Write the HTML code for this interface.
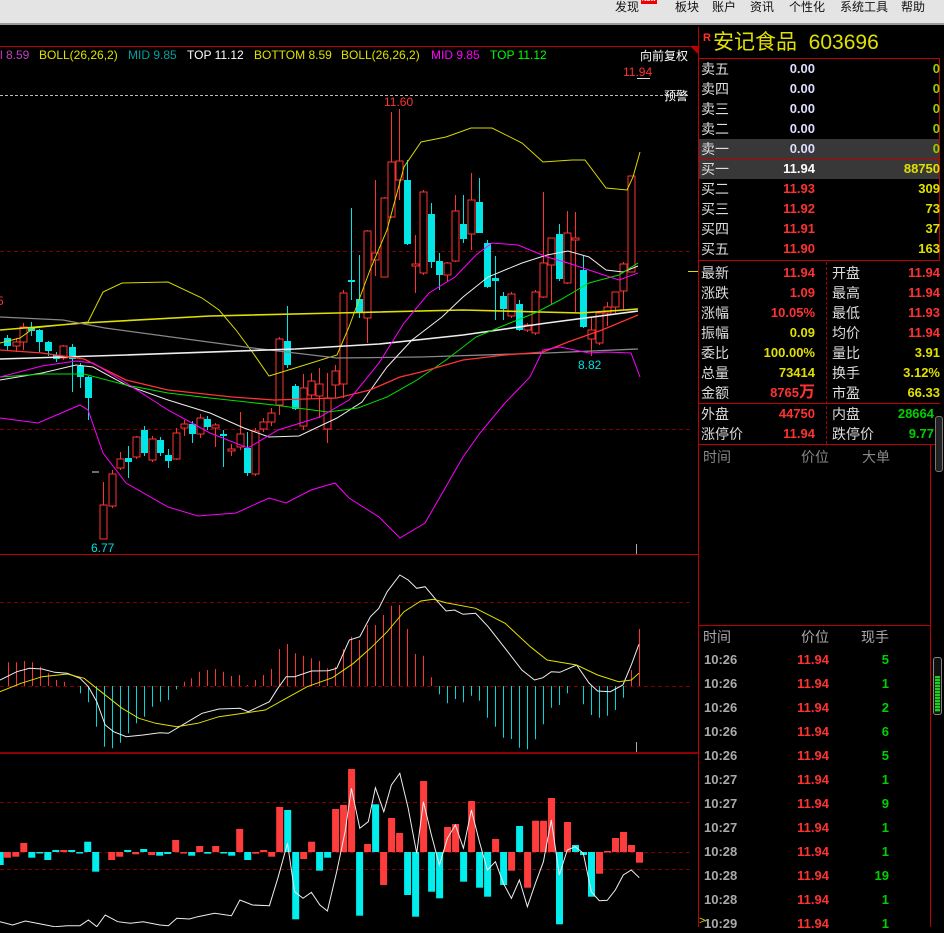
<!DOCTYPE html>
<html><head><meta charset="utf-8"><style>
*{margin:0;padding:0;box-sizing:border-box}
body{width:944px;height:927px;background:#000;overflow:hidden;position:relative;font-family:"Liberation Sans","Noto Sans CJK SC",sans-serif}
#top{position:absolute;left:0;top:0;width:944px;height:25px;background:#e4e4e4;border-bottom:2px solid #9a9a9a}
#top span{position:absolute;top:0;font-size:12px;color:#111;line-height:14px}
#top .new{position:absolute;left:641px;top:-3px;background:#e00;color:#fff;font-size:6px;line-height:7px;padding:0 1px;font-weight:bold}
.r{position:absolute;font-size:13px;white-space:nowrap;line-height:18px}
.n{font-weight:bold;text-align:right}
</style></head><body>
<div id="top">
<span style="left:615px">发现</span><span class="new">NEW</span>
<span style="left:675px">板块</span><span style="left:712px">账户</span><span style="left:750px">资讯</span><span style="left:789px">个性化</span><span style="left:840px">系统工具</span><span style="left:901px">帮助</span>
</div>
<svg id="ch" width="944" height="927" style="position:absolute;left:0;top:0" xmlns="http://www.w3.org/2000/svg">
<line x1="0" y1="46.5" x2="690" y2="46.5" stroke="#c00000"/>
<polygon points="690,46 698,46 698,54" fill="#c00000"/>
<line x1="0" y1="95.5" x2="690" y2="95.5" stroke="#bbb" stroke-dasharray="3,2"/>
<line x1="0" y1="251.5" x2="690" y2="251.5" stroke="#800000" stroke-dasharray="4,3"/>
<line x1="0" y1="429.5" x2="690" y2="429.5" stroke="#800000" stroke-dasharray="4,3"/>
<line x1="0" y1="554.5" x2="698" y2="554.5" stroke="#c00000"/>
<line x1="0" y1="602.5" x2="690" y2="602.5" stroke="#800000" stroke-dasharray="4,3"/>
<line x1="0" y1="686.5" x2="690" y2="686.5" stroke="#800000" stroke-dasharray="4,3"/>
<line x1="0" y1="753" x2="698" y2="753" stroke="#c00000" stroke-width="1.5"/>
<line x1="0" y1="802.5" x2="690" y2="802.5" stroke="#800000" stroke-dasharray="4,3"/>
<line x1="0" y1="852.5" x2="690" y2="852.5" stroke="#800000" stroke-dasharray="4,3"/>
<line x1="0" y1="869.5" x2="690" y2="869.5" stroke="#800000" stroke-dasharray="4,3"/>
<line x1="698.5" y1="27" x2="698.5" y2="927" stroke="#c00000"/>
<line x1="637" y1="78.5" x2="650" y2="78.5" stroke="#ddd"/>
<line x1="688" y1="271.5" x2="698" y2="271.5" stroke="#dd0"/>
<line x1="636.5" y1="544" x2="636.5" y2="554" stroke="#aaa"/>
<line x1="636.5" y1="742" x2="636.5" y2="752" stroke="#aaa"/>
<g id="g"></g>
<g font-size="12" font-family="Liberation Sans,Noto Sans CJK SC,sans-serif">
<text x="0" y="59" fill="#c040c0">l 8.59</text>
<text x="39" y="59" fill="#e0e000">BOLL(26,26,2)</text>
<text x="128" y="59" fill="#00a0a0">MID 9.85</text>
<text x="187" y="59" fill="#fff">TOP 11.12</text>
<text x="254" y="59" fill="#e0e000">BOTTOM 8.59</text>
<text x="341" y="59" fill="#e0e000">BOLL(26,26,2)</text>
<text x="431" y="59" fill="#ff00ff">MID 9.85</text>
<text x="490" y="59" fill="#00ff00">TOP 11.12</text>
<text x="640" y="60" fill="#fff">向前复权</text>
<text x="623" y="76" fill="#ff3232">11.94</text>
<text x="664" y="100" fill="#fff">预警</text>
<text x="384" y="106" fill="#ff3232">11.60</text>
<text x="-3" y="305" fill="#ff3232">5</text>
<text x="578" y="369" fill="#00e0e0">8.82</text>
<text x="91" y="552" fill="#00e0e0">6.77</text>
</g>
</svg>

<div class="r" style="left:703px;top:29px;color:#ff3232;font-size:11px;font-weight:bold">R</div>
<div class="r" style="left:713px;top:30px;color:#e0e000;font-size:21px;line-height:26px">安记食品&nbsp; 603696</div>
<div style="position:absolute;left:698px;top:58px;width:242px;height:203px;border:1px solid #c00000"></div>
<div style="position:absolute;left:699px;top:139px;width:240px;height:40px;background:#383838"></div>
<div style="position:absolute;left:698px;top:159px;width:242px;height:1px;background:#c00000"></div>
<div style="position:absolute;left:698px;top:403px;width:242px;height:1px;background:#c00000"></div>
<div style="position:absolute;left:698px;top:444px;width:242px;height:1px;background:#c00000"></div>
<div style="position:absolute;left:826px;top:262px;width:1px;height:182px;border-left:1px dashed #a00000"></div>
<div style="position:absolute;left:698px;top:625px;width:232px;height:1px;background:#c00000"></div>
<div style="position:absolute;left:930px;top:445px;width:1px;height:482px;background:#c00000"></div>
<div style="position:absolute;left:935px;top:416px;width:8px;height:56px;border:1px solid #777;border-radius:3px;background:#222"></div>
<div style="position:absolute;left:933px;top:657px;width:9px;height:58px;border:1px solid #888;border-radius:3px;background:#111"><div style="margin:18px 1px 0;height:36px;background:repeating-linear-gradient(#2c2 0 2px,#060 2px 3px)"></div></div>
<div id="rp"></div>
<script>
(function(){
var rp=document.getElementById('rp'),h='';
function t(x,y,s,c,extra){h+='<div class="r" style="left:'+x+'px;top:'+(y-9)+'px;color:'+c+';'+(extra||'')+'">'+s+'</div>';}
function tr(x,y,s,c,extra){h+='<div class="r n" style="right:'+(944-x)+'px;top:'+(y-9)+'px;color:'+c+';'+(extra||'')+'">'+s+'</div>';}
var q=[['卖五','0.00','0','#ddf'],['卖四','0.00','0','#ddf'],['卖三','0.00','0','#ddf'],['卖二','0.00','0','#ddf'],['卖一','0.00','0','#ddf'],['买一','11.94','88750','#fff'],['买二','11.93','309','#ff3232'],['买三','11.92','73','#ff3232'],['买四','11.91','37','#ff3232'],['买五','11.90','163','#ff3232']];
q.forEach(function(r,i){var y=69+i*20;t(701,y,r[0],'#ddd','font-size:14px');tr(815,y,r[1],r[3]);tr(940,y,r[2],i<5?'#9c0':'#e0e000');});
var s=[['最新','11.94','#ff3232','开盘','11.94','#ff3232'],['涨跌','1.09','#ff3232','最高','11.94','#ff3232'],['涨幅','10.05%','#ff3232','最低','11.93','#ff3232'],['振幅','0.09','#e0e000','均价','11.94','#ff3232'],['委比','100.00%','#e0e000','量比','3.91','#e0e000'],['总量','73414','#e0e000','换手','3.12%','#e0e000'],['金额','8765<span style="font-size:16px;line-height:1">万</span>','#ff3232','市盈','66.33','#e0e000']];
s.forEach(function(r,i){var y=273+i*20;t(701,y,r[0],'#ddd','font-size:14px');tr(815,y,r[1],r[2]);t(832,y,r[3],'#ddd','font-size:14px');tr(940,y,r[4],r[5]);});
t(701,414,'外盘','#ddd','font-size:14px');tr(815,414,'44750','#ff3232');t(832,414,'内盘','#ddd','font-size:14px');tr(934,414,'28664','#00d000');
t(701,434,'涨停价','#ddd','font-size:14px');tr(815,434,'11.94','#ff3232');t(832,434,'跌停价','#ddd','font-size:14px');tr(934,434,'9.77','#00d000');
t(703,457,'时间','#888','font-size:14px');t(801,457,'价位','#888','font-size:14px');t(862,457,'大单','#888','font-size:14px');
t(703,637,'时间','#aaa','font-size:14px');t(801,637,'价位','#aaa','font-size:14px');t(861,637,'现手','#aaa','font-size:14px');
var tm=['10:26','10:26','10:26','10:26','10:26','10:27','10:27','10:27','10:28','10:28','10:28','10:29'],v=['5','1','2','6','5','1','9','1','1','19','1','1'];
tm.forEach(function(a,i){var y=660+i*24;t(704,y,a,'#aaa','font-weight:bold');tr(829,y,'11.94','#ff3232');tr(889,y,v[i],'#00d000');});
h+='<div class="r" style="left:699px;top:912px;color:#dd0;font-size:11px">&gt;</div>';
rp.innerHTML=h;

var g='',X=function(z){return z/2.376};
function pl(pts,c,w){g+='<polyline fill="none" stroke="'+c+'" stroke-width="'+(w||1)+'" points="'+pts.map(function(p){return p.join(',')}).join(' ')+'"/>';}
var C=[[7,338,346,335,350,'c'],[16,342,346,338,352,'r'],[23,327,342,323,350,'r'],[31,327,331,322,336,'c'],[39,330,342,329,352,'c'],[48,342,351,341,356,'c'],[56,355,359,352,362,'c'],[63,346,358,345,360,'r'],[72,347,359,344,392,'c'],[80,366,377,363,388,'c'],[88,377,398,376,420,'c'],[103,505,539,482,539,'r'],[112,474,506,470,508,'r'],[120,459,468,452,470,'r'],[128,458,462,446,478,'c'],[136,437,457,436,459,'r'],[144,430,453,426,456,'c'],[152,439,460,436,462,'r'],[160,440,453,437,456,'c'],[168,455,461,449,468,'c'],[176,433,459,428,460,'r'],[184,424,428,420,436,'r'],[192,424,434,421,443,'c'],[200,418,434,414,438,'r'],[207,419,427,416,430,'c'],[215,425,428,423,447,'r'],[223,434,436,430,467,'c'],[231,449,451,444,456,'r'],[240,434,447,412,450,'r'],[247,448,473,432,476,'c'],[255,431,474,428,476,'r'],[263,422,429,418,432,'r'],[271,413,422,408,426,'r'],[279,339,405,337,415,'r'],[287,341,365,306,368,'c'],[295,386,409,384,410,'c'],[303,388,426,374,430,'r'],[311,381,395,373,398,'r'],[319,384,396,368,418,'r'],[327,398,429,373,443,'r'],[335,371,385,365,398,'r'],[343,293,384,290,398,'r'],[351,280,282,208,300,'c'],[359,299,313,255,318,'c'],[367,231,318,230,343,'r'],[375,253,260,180,276,'r'],[384,198,277,197,277,'r'],[391,162,217,112,218,'r'],[399,161,180,109,200,'r'],[407,180,244,160,245,'c'],[415,264,266,235,293,'r'],[423,192,273,190,275,'r'],[431,214,262,203,268,'c'],[439,261,275,253,290,'c'],[447,263,275,262,282,'r'],[455,211,261,195,262,'r'],[463,224,239,195,243,'c'],[471,200,234,173,250,'r'],[479,202,233,178,233,'c'],[487,243,287,240,288,'c'],[495,278,281,256,320,'c'],[503,296,309,292,320,'c'],[511,294,316,292,318,'r'],[519,304,330,300,331,'c'],[527,325,330,323,332,'r'],[535,292,333,290,335,'r'],[543,263,297,192,298,'r'],[551,238,265,238,305,'r'],[559,234,279,224,281,'c'],[567,233,283,211,284,'r'],[575,238,240,212,312,'r'],[583,270,327,256,328,'c'],[591,330,339,318,356,'r'],[599,313,343,313,345,'r'],[607,307,313,302,326,'r'],[615,292,307,292,313,'r'],[623,264,291,262,310,'r'],[631,176,272,176,272,'r']];
C.forEach(function(c){var col=c[5]=='r'?'#ff3232':'#00e5e5';
g+='<line x1="'+(c[0]+.5)+'" y1="'+c[3]+'" x2="'+(c[0]+.5)+'" y2="'+c[4]+'" stroke="'+col+'"/>';
if(c[5]=='r')g+='<rect x="'+(c[0]-3)+'" y="'+c[1]+'" width="7" height="'+Math.max(1,c[2]-c[1])+'" fill="#000" stroke="'+col+'"/>';
else g+='<rect x="'+(c[0]-3)+'" y="'+c[1]+'" width="7" height="'+Math.max(2,c[2]-c[1])+'" fill="'+col+'"/>';});
g+='<line x1="92" y1="472" x2="99" y2="472" stroke="#ddd"/>';
pl([[0,343],[20,338],[34,328],[88,322],[103,292],[122,283],[168,282],[202,298],[219,310],[236,330],[253,353],[269,376],[295,368],[337,355],[349,327],[370,270],[387,230],[404,167],[421,142],[446,137],[471,128],[492,128],[522,143],[543,162],[572,160],[585,160],[606,188],[627,190],[633,177],[640,152]],'#d8d800');
pl([[0,330],[84,323],[210,316],[337,313],[463,310],[581,313],[638,309]],'#e0e000',1.6);
pl([[0,317],[63,320],[105,328],[253,348],[337,358],[421,357],[547,353],[638,349]],'#888',1.3);
pl([[0,359],[126,355],[295,349],[379,344],[463,335],[547,323],[638,311]],'#eee',1.6);
pl([[0,380],[42,373],[76,365],[93,367],[126,385],[168,400],[210,413],[244,428],[269,437],[299,436],[337,418],[362,402],[387,367],[412,340],[442,317],[463,297],[488,277],[522,263],[547,255],[568,251],[589,257],[606,270],[623,272],[638,266]],'#eee');
pl([[0,377],[42,374],[84,374],[126,385],[168,393],[210,398],[274,405],[328,412],[358,408],[387,397],[417,380],[446,360],[476,337],[505,325],[535,313],[560,300],[589,283],[619,275],[638,263]],'#00e000');
pl([[0,350],[42,353],[84,359],[126,380],[168,390],[232,397],[274,400],[337,398],[370,390],[400,377],[421,372],[463,360],[505,355],[543,352],[568,342],[602,330],[638,315]],'#ff3232',1.3);
pl([[0,377],[42,366],[76,361],[93,363],[126,383],[168,410],[210,433],[248,448],[278,430],[320,417],[349,400],[379,363],[404,323],[429,293],[455,277],[476,255],[492,243],[518,245],[547,257],[568,263],[598,273],[619,280],[638,273]],'#ff00ff');
pl([[0,418],[38,423],[80,405],[88,410],[103,453],[126,483],[168,507],[198,516],[236,513],[269,498],[286,503],[311,490],[335,483],[349,498],[379,517],[400,538],[425,523],[463,457],[480,433],[505,403],[530,377],[543,350],[560,347],[589,353],[606,352],[631,353],[640,377]],'#ff00ff');
var M=[[18,322],[37,322],[56,318],[75,322],[94,335],[113,355],[132,375],[151,380],[189,415],[208,442],[227,515],[246,575],[265,580],[284,563],[303,535],[322,505],[341,485],[360,455],[379,440],[398,435],[417,403],[436,380],[455,370],[474,350],[493,345],[512,342],[531,350],[550,363],[569,360],[588,390],[607,375],[626,360],[645,342],[664,282],[683,267],[702,295],[721,302],[740,310],[759,318],[778,340],[797,335],[816,283],[835,245],[854,255],[873,210],[892,210],[911,180],[930,152],[949,150],[968,222],[987,297],[1006,302],[1025,367],[1044,418],[1063,445],[1082,432],[1101,442],[1120,422],[1139,437],[1158,488],[1177,515],[1196,548],[1215,552],[1234,578],[1253,583],[1272,553],[1291,508],[1310,458],[1329,450],[1348,415],[1386,448],[1405,480],[1424,488],[1443,482],[1462,465],[1481,428],[1500,345],[1519,222]];
M.forEach(function(m){var x=(Math.round(X(m[0]))+.5),y=555+m[1]/3;g+='<line x1="'+x+'" y1="686" x2="'+x+'" y2="'+y.toFixed(1)+'" stroke="'+(y<686?'#ff3232':'#00d8d8')+'"/>';});
var cv=function(a){return a.map(function(p){return [X(p[0]).toFixed(1),(555+p[1]/3).toFixed(1)]})};
pl(cv([[0,375],[40,350],[70,340],[100,342],[130,352],[160,355],[190,370],[210,395],[230,440],[250,510],[270,530],[300,545],[340,540],[380,533],[400,535],[440,505],[480,475],[520,462],[570,460],[590,470],[640,440],[660,400],[680,365],[700,365],[740,348],[780,347],[800,340],[830,255],[855,245],[880,185],[900,160],[920,110],[950,60],[970,75],[990,100],[1010,95],[1040,140],[1060,168],[1080,165],[1100,178],[1130,175],[1160,215],[1200,280],[1240,345],[1270,375],[1290,368],[1310,350],[1330,352],[1370,330],[1400,385],[1420,408],[1450,410],[1480,390],[1500,330],[1518,268]]),'#eee');
pl(cv([[0,410],[50,385],[100,365],[160,357],[200,370],[240,410],[290,460],[330,490],[370,505],[420,515],[470,505],[520,485],[570,476],[630,465],[680,430],[730,395],[790,368],[840,325],[880,280],[920,230],[960,170],[1000,138],[1030,133],[1060,143],[1130,160],[1200,205],[1260,275],[1300,315],[1370,330],[1420,360],[1470,380],[1500,375],[1518,355]]),'#e0e000');
var V=[[0,930,'c'],[17,908,'r'],[37,905,'r'],[56,864,'r'],[75,908,'c'],[94,893,'c'],[113,915,'c'],[132,885,'c'],[151,885,'r'],[170,885,'c'],[189,893,'c'],[208,860,'c'],[227,950,'c'],[265,915,'r'],[284,905,'r'],[303,885,'c'],[322,898,'r'],[341,882,'c'],[360,900,'r'],[379,902,'c'],[398,897,'c'],[417,855,'r'],[436,893,'r'],[455,902,'c'],[474,873,'r'],[493,896,'c'],[512,873,'r'],[531,893,'c'],[550,902,'c'],[569,822,'r'],[588,915,'c'],[607,896,'r'],[626,885,'r'],[645,905,'r'],[664,756,'r'],[683,765,'c'],[702,1093,'c'],[721,912,'r'],[740,860,'r'],[759,947,'c'],[778,908,'c'],[797,762,'r'],[816,750,'r'],[835,642,'r'],[854,1082,'c'],[873,867,'r'],[892,748,'c'],[911,990,'r'],[930,789,'r'],[949,834,'r'],[968,1020,'c'],[987,1085,'c'],[1006,678,'r'],[1025,1010,'c'],[1044,1030,'c'],[1063,816,'r'],[1082,807,'r'],[1101,980,'c'],[1120,738,'r'],[1139,998,'c'],[1158,1025,'c'],[1177,852,'r'],[1196,990,'c'],[1215,947,'r'],[1234,813,'c'],[1253,998,'r'],[1272,797,'r'],[1291,797,'r'],[1310,729,'r'],[1329,1108,'c'],[1348,801,'r'],[1367,870,'c'],[1386,900,'c'],[1405,1025,'c'],[1424,956,'r'],[1443,888,'r'],[1462,849,'r'],[1481,831,'r'],[1500,870,'r'],[1519,923,'r']];
V.forEach(function(v){var x=X(v[0])-3.3,y=555+v[1]/3,b=852;var t=Math.min(y,b),hh=Math.max(1.5,Math.abs(y-b));g+='<rect x="'+x.toFixed(1)+'" y="'+t.toFixed(1)+'" width="7" height="'+hh.toFixed(1)+'" fill="'+(v[2]=='r'?'#ff3c3c':'#00eeee')+'"/>';});
pl(cv([[0,1100],[30,1110],[60,1098],[100,1108],[130,1115],[160,1112],[190,1112],[210,1095],[230,1115],[250,1080],[280,1100],[310,1105],[340,1100],[380,1110],[400,1112],[420,1090],[450,1092],[470,1085],[510,1075],[550,1082],[570,1035],[600,1050],[640,1052],[660,970],[683,865],[700,1010],[720,1030],[740,1012],[760,1050],[778,1068],[800,950],[820,830],[835,700],[855,820],[875,800],[892,698],[912,770],[930,690],[950,655],[970,760],[990,895],[1006,740],[1025,840],[1044,930],[1063,850],[1082,810],[1101,880],[1120,765],[1139,860],[1158,945],[1177,920],[1196,985],[1215,1030],[1234,975],[1253,1055],[1272,985],[1291,920],[1310,795],[1329,960],[1348,885],[1367,875],[1386,895],[1405,1010],[1424,1037],[1443,1036],[1462,1005],[1481,960],[1500,945],[1519,968]]),'#eee');
document.getElementById('g').innerHTML=g;
})();
</script>
</body></html>
